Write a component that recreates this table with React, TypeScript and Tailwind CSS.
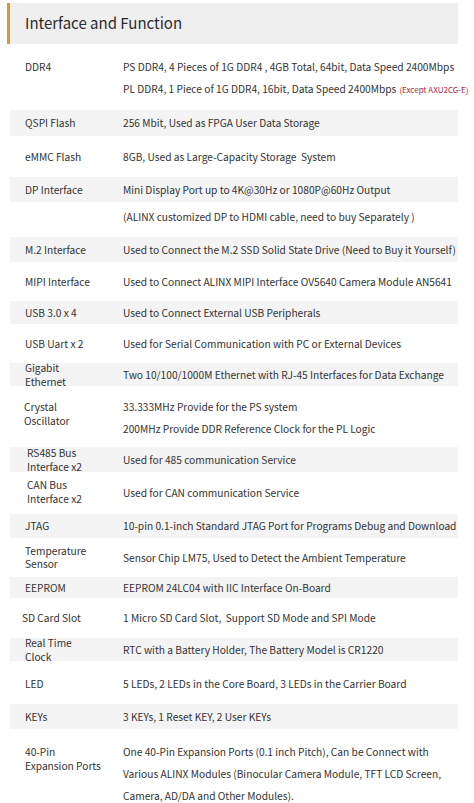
type Row = {
  label: string[];
  values: string[];
  gray: boolean;
  h: string;
  align?: string;
  labelClass?: string;
  note?: string;
};

const rows: Row[] = [
  {
    label: ["DDR4"],
    values: [
      "PS DDR4, 4 Pieces of 1G DDR4 , 4GB Total, 64bit, Data Speed 2400Mbps",
      "PL DDR4, 1 Piece of 1G DDR4, 16bit, Data Speed 2400Mbps",
    ],
    note: "(Except AXU2CG-E)",
    gray: false,
    h: "h-[66px]",
    align: "items-start pt-[12px]",
    labelClass: "pl-[15px] mt-[4px]",
  },
  { label: ["QSPI Flash"], values: ["256 Mbit, Used as FPGA User Data Storage"], gray: true, h: "h-[26px]" },
  { label: ["eMMC Flash"], values: ["8GB, Used as Large-Capacity Storage  System"], gray: false, h: "h-[41px]" },
  { label: ["DP Interface"], values: ["Mini Display Port up to 4K@30Hz or 1080P@60Hz Output"], gray: true, h: "h-[25px]" },
  {
    label: [""],
    values: ["(ALINX customized DP to HDMI cable, need to buy Separately )"],
    gray: false,
    h: "h-[35px]",
    align: "items-start pt-[4px]",
  },
  { label: ["M.2 Interface"], values: ["Used to Connect the M.2 SSD Solid State Drive (Need to Buy it Yourself)"], gray: true, h: "h-[25px]" },
  { label: ["MIPI Interface"], values: ["Used to Connect ALINX MIPI Interface OV5640 Camera Module AN5641"], gray: false, h: "h-[39px]" },
  { label: ["USB 3.0 x 4"], values: ["Used to Connect External USB Peripherals"], gray: true, h: "h-[23px]" },
  { label: ["USB Uart x 2"], values: ["Used for Serial Communication with PC or External Devices"], gray: false, h: "h-[39px]" },
  {
    label: ["Gigabit", "Ethernet"],
    values: ["Two 10/100/1000M Ethernet with RJ-45 Interfaces for Data Exchange"],
    gray: true,
    h: "h-[23px]",
  },
  {
    label: ["Crystal", "Oscillator"],
    values: ["33.333MHz Provide for the PS system", "200MHz Provide DDR Reference Clock for the PL Logic"],
    gray: false,
    h: "h-[61px]",
    align: "items-start pt-[10px]",
    labelClass: "mt-[4px] pl-[14px]",
  },
  { label: ["RS485 Bus", "Interface x2"], values: ["Used for 485 communication Service"], gray: true, h: "h-[25px]", labelClass: "pl-[17px]" },
  { label: ["CAN Bus", "Interface x2"], values: ["Used for CAN communication Service"], gray: false, h: "h-[42px]", labelClass: "pl-[17px] -mt-[3px]" },
  { label: ["JTAG"], values: ["10-pin 0.1-inch Standard JTAG Port for Programs Debug and Download"], gray: true, h: "h-[24px]" },
  { label: ["Temperature", "Sensor"], values: ["Sensor Chip LM75, Used to Detect the Ambient Temperature"], gray: false, h: "h-[39px]", labelClass: "pl-[15px] -mt-[1px]" },
  { label: ["EEPROM"], values: ["EEPROM 24LC04 with IIC Interface On-Board"], gray: true, h: "h-[21px]" },
  { label: ["SD Card Slot"], values: ["1 Micro SD Card Slot,  Support SD Mode and SPI Mode"], gray: false, h: "h-[40px]", labelClass: "pl-[12px]" },
  { label: ["Real Time", "Clock"], values: ["RTC with a Battery Holder, The Battery Model is CR1220"], gray: true, h: "h-[23px]" },
  { label: ["LED"], values: ["5 LEDs, 2 LEDs in the Core Board, 3 LEDs in the Carrier Board"], gray: false, h: "h-[43px]", align: "items-center pt-[3px]" },
  { label: ["KEYs"], values: ["3 KEYs, 1 Reset KEY, 2 User KEYs"], gray: true, h: "h-[25px]" },
  {
    label: ["40-Pin", "Expansion Ports"],
    values: [
      "One 40-Pin Expansion Ports (0.1 inch Pitch), Can be Connect with",
      "Various ALINX Modules (Binocular Camera Module, TFT LCD Screen,",
      "Camera, AD/DA and Other Modules).",
    ],
    gray: false,
    h: "h-[80px]",
    align: "items-start pt-[12px]",
    labelClass: "pl-[15px] mt-[4px]",
  },
];

export default function App() {
  return (
    <div className="w-[474px] min-h-[803px] bg-white pt-[3px] text-[#333333] font-['Noto_Sans_CJK_SC','Noto_Sans',sans-serif]">
      <div className="ml-[7px] flex h-[41px] w-[451px] items-center border-l-[3px] border-[#d49a34] bg-[#efefef] pl-[15px]">
        <h2 className="text-[15px] font-normal text-[#2b2b2b]">Interface and Function</h2>
      </div>
      <div className="ml-[10px] w-[448px] text-[10.2px]">
        {rows.map((row, i) => (
          <div key={i} className={`flex ${row.h} ${row.align ?? "items-center"} ${row.gray ? "bg-[#f4f4f4]" : ""}`}>
            <div className={`w-[113px] shrink-0 leading-[13.5px] ${row.labelClass ?? "pl-[15px]"}`}>
              {row.label.map((l) => (
                <div key={l}>{l}</div>
              ))}
            </div>
            <div className="min-w-0 flex-1 leading-[22px] whitespace-pre">
              {row.values.map((v, j) => (
                <div key={v}>
                  {v}
                  {row.note && j === row.values.length - 1 ? (
                    <span className="ml-[3px] text-[8px] text-[#a3293d]">{row.note}</span>
                  ) : null}
                </div>
              ))}
            </div>
          </div>
        ))}
      </div>
    </div>
  );
}
